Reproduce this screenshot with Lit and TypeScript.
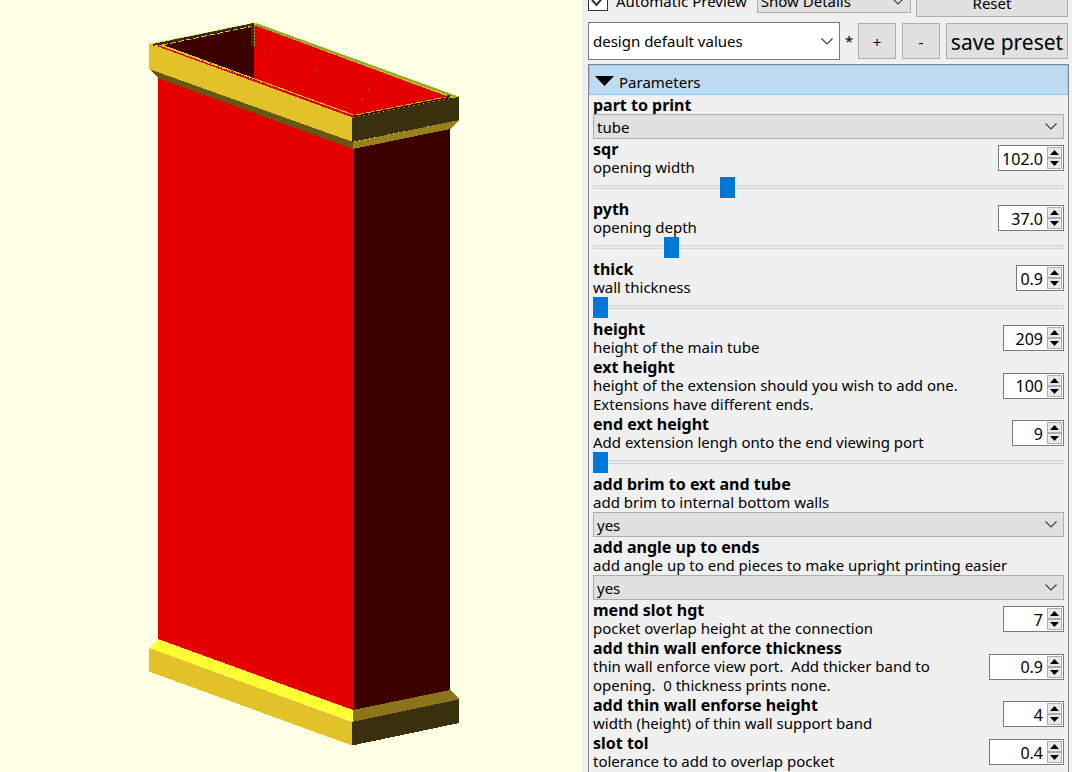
import { LitElement, html, css, svg } from "lit";
import { customElement, property } from "lit/decorators.js";

interface Param {
  id: string;
  name: string;
  desc?: string;
  kind: "select" | "number";
  value: string;
  size?: "s" | "m" | "l" | "xl" | "xxl";
  slider?: number;
}

const PARAMS: Param[] = [
  { id: "part", name: "part to print", kind: "select", value: "tube" },
  { id: "sqr", name: "sqr", desc: "opening width", kind: "number", value: "102.0", size: "xl", slider: 279 },
  { id: "pyth", name: "pyth", desc: "opening depth", kind: "number", value: "37.0", size: "xl", slider: 156 },
  { id: "thick", name: "thick", desc: "wall thickness", kind: "number", value: "0.9", size: "s", slider: 0 },
  { id: "height", name: "height", desc: "height of the main tube", kind: "number", value: "209", size: "l" },
  { id: "ext", name: "ext height", desc: "height of the extension should you wish to add one. Extensions have different ends.", kind: "number", value: "100", size: "l" },
  { id: "end", name: "end ext height", desc: "Add extension lengh onto the end viewing port", kind: "number", value: "9", size: "m", slider: 0 },
  { id: "brim", name: "add brim to ext and tube", desc: "add brim to internal bottom walls", kind: "select", value: "yes" },
  { id: "angle", name: "add angle up to ends", desc: "add angle up to end pieces to make upright printing easier", kind: "select", value: "yes" },
  { id: "mend", name: "mend slot hgt", desc: "pocket overlap height at the connection", kind: "number", value: "7", size: "l" },
  { id: "thin", name: "add thin wall enforce thickness", desc: "thin wall enforce view port.  Add thicker band to opening.  0 thickness prints none.", kind: "number", value: "0.9", size: "xxl" },
  { id: "band", name: "add thin wall enforse height", desc: "width (height) of thin wall support band", kind: "number", value: "4", size: "l" },
  { id: "tol", name: "slot tol", desc: "tolerance to add to overlap pocket", kind: "number", value: "0.4", size: "xxl" },
];

const chevron = svg`<path d="M0.5 0.5 L6 6 L11.5 0.5" fill="none" stroke="#404040" stroke-width="1.2"/>`;

const controls = css`
  * { box-sizing: border-box; }
  button, input, select {
    font: inherit;
    color: #000;
    margin: 0;
    border-radius: 0;
    outline: none;
  }
  .combo { display: grid; min-width: 0; }
  .combo > * { grid-area: 1 / 1; }
  .combo select {
    appearance: none;
    width: 100%;
    height: 25px;
    padding: 1px 24px 0 3px;
    border: 1px solid #adadad;
    background: #e1e1e1;
  }
  .combo svg {
    width: 12px;
    height: 7px;
    justify-self: end;
    align-self: center;
    margin-right: 7px;
    pointer-events: none;
  }
`;

@customElement("tube-view")
class TubeView extends LitElement {
  static styles = css`
    :host { display: block; background: #ffffe5; min-width: 0; overflow: hidden; }
    .scene { display: block; width: 100%; height: 100%; }
  `;
  render() {
    return html`<svg class="scene" viewBox="0 0 582 772" preserveAspectRatio="xMidYMid meet" shape-rendering="crispEdges" role="img" aria-label="tube">
      <polygon points="158,76 354,147 354,711 158,641" fill="#e40000" />
      <polygon points="354,147 450,127 450,691 354,711" fill="#3c0000" />
      <polygon points="158,639 353,710 353,722 149,648" fill="#ffff33" />
      <polygon points="353,710 450,690 459,699 459,700 353,722" fill="#8a751a" />
      <polygon points="149,648 352,722 352,745.5 149,671.5" fill="#e1c229" />
      <polygon points="352,722 459,699.3 459,723 352,745.5" fill="#3a300d" />
      <polygon points="149,44 255,22.5 459,96.5 352,118" fill="#e1c229" />
      <polygon points="160,44.5 254,25 254,80" fill="#3c0000" />
      <polygon points="254,25 449,97 354,117 254,80" fill="#e40000" />
      <polygon points="149,44 352.5,118 352.5,142 149,69" fill="#e1c229" />
      <polygon points="352,118 459,96.5 459,120 352,142" fill="#3a300d" />
      <path d="M153 45 L254 24" stroke="#2a3316" stroke-width="2" fill="none" />
      <path d="M162 45 L251 26.5" stroke="#e1c229" stroke-width="1" stroke-dasharray="6 2" fill="none" />
      <path d="M256 24.4 L456 97" stroke="#87a83c" stroke-width="2" fill="none" />
      <path d="M163 45.5 L353 114.8" stroke="#e1c229" stroke-width="1.1" fill="none" />
      <path d="M158 45.8 L353 117" stroke="#e40000" stroke-width="1.3" fill="none" />
      <path d="M354 116.6 L450 97.3" stroke="#3c0000" stroke-width="1.4" fill="none" />
      <path d="M356 115 L446 97" stroke="#e1c229" stroke-width="1" stroke-dasharray="8 2" fill="none" />
      <rect x="251" y="25" width="3" height="21" fill="#2a3316" />
      <path d="M254.5 26 V47" stroke="#87a83c" stroke-width="1" stroke-dasharray="2 1" />
      <polygon points="444,96 450,95 450,98 446,98" fill="#2a3316" />
      <path d="M264 50h1v1h-1z M316 69h1v1h-1z M368 88h1v1h-1z" fill="#4f9a2c" />
      <rect x="362" y="99" width="1" height="1" fill="#e1a229" />
      <polygon points="149,69 353,142 353,149 158,78" fill="#675713" />
      <polygon points="353,142 459,120 450,129 353,149" fill="#98811b" />
    </svg>`;
  }
}

@customElement("param-row")
class ParamRow extends LitElement {
  @property({ attribute: false }) param!: Param;
  static styles = [
    controls,
    css`
      :host { display: block; }
      .line { display: flex; align-items: center; justify-content: space-between; gap: 28px; }
      .text { display: block; min-width: 0; white-space: pre-wrap; }
      .name { display: block; padding-top: 2px; font-weight: bold; font-size: 16px; line-height: 17px; }
      .desc { display: block; }
      .spin { display: flex; flex: none; height: 26px; border: 1px solid #7a7a7a; background: #fff; padding: 1px; }
      .s { width: 48px; }
      .m { width: 52px; }
      .l { width: 61px; }
      .xl { width: 66px; }
      .xxl { width: 75px; }
      .value { flex: 1; width: 0; border: 0; padding: 2px 4px 0 0; background: transparent; text-align: right; font-size: 16px; }
      .steps { display: grid; grid-template-rows: 1fr 1fr; width: 15px; }
      .step { display: grid; place-items: center; padding: 0; border: 1px solid #adadad; background: #e9e9e9; }
      .step svg { display: block; width: 9px; height: 5px; }
      .slider { appearance: none; display: block; width: 100%; height: 20px; margin: 0 0 2px; background: transparent; }
      .slider::-webkit-slider-runnable-track { height: 4px; box-shadow: inset 0 0 0 1px #d6d6d6; background: #e7eaea; }
      .slider::-webkit-slider-thumb { appearance: none; width: 15px; height: 21px; margin-top: -8px; background: #0078d7; border-radius: 0; }
    `,
  ];
  render() {
    const p = this.param;
    const text = html`<label class="text" for=${p.id}><span class="name">${p.name}</span>${p.desc ? html`<span class="desc">${p.desc}</span>` : ""}</label>`;
    if (p.kind === "select") {
      return html`${text}
        <div class="combo"><select id=${p.id}><option>${p.value}</option></select><svg viewBox="0 0 12 7">${chevron}</svg></div>`;
    }
    return html`<div class="line">${text}
        <div class="spin ${p.size}">
          <input class="value" id=${p.id} type="text" inputmode="decimal" .value=${p.value} />
          <div class="steps">
            <button class="step" aria-label="increase"><svg viewBox="0 0 9 5"><path d="M0 5 L4.5 0 L9 5z" /></svg></button>
            <button class="step" aria-label="decrease"><svg viewBox="0 0 9 5"><path d="M0 0 L4.5 5 L9 0z" /></svg></button>
          </div>
        </div>
      </div>
      ${p.slider === undefined ? "" : html`<input class="slider" type="range" min="0" max="1000" .value=${String(p.slider)} aria-label=${p.name} />`}`;
  }
}

@customElement("app-root")
class AppRoot extends LitElement {
  static styles = [
    controls,
    css`
      :host {
        display: grid;
        grid-template-columns: minmax(0, 582fr) minmax(0, 490fr);
        height: 100vh;
        overflow: hidden;
        font: 15px/19px "Noto Sans", sans-serif;
        color: #000;
      }
      .panel { display: flex; flex-direction: column; min-width: 0; min-height: 0; overflow: hidden; background: #f0f0f0; padding: 0 3px 0 6px; }
      .top { display: flex; align-items: flex-start; flex: none; gap: 5px; margin: -11px 1px 0 0; }
      .auto { display: flex; align-items: center; gap: 8px; height: 24px; margin-right: 5px; white-space: nowrap; }
      .box { appearance: none; width: 20px; height: 20px; border: 1px solid #333; background: #fff; }
      .tick { display: grid; }
      .tick > * { grid-area: 1 / 1; place-self: center; }
      .tick svg { width: 14px; height: 12px; pointer-events: none; }
      .details { flex: 1; }
      .details select { height: 24px; }
      .btn { border: 1px solid #adadad; background: #e1e1e1; padding: 2px 0 0; white-space: nowrap; }
      .reset { flex: none; width: 152px; height: 28px; padding: 0; }
      .presets { display: flex; align-items: center; flex: none; gap: 6px; margin: 5px 1px 0 0; }
      .preset { flex: 1; }
      .preset select { height: 38px; border-color: #7a7a7a; background: #fff; padding-left: 4px; }
      .star { width: 6px; display: flex; justify-content: center; }
      .small { width: 38px; height: 36px; }
      .save { width: 122px; height: 36px; font-size: 21px; }
      .group { flex: 1 0 auto; margin-top: 4px; border: 1px solid #828790; border-bottom: 0; }
      .head { display: flex; align-items: center; gap: 5px; width: 100%; height: 30px; padding: 4px 5px 0; border: 1px solid #90c8f6; background: #bfdbf2; text-align: left; }
      .head svg { width: 19px; height: 10px; margin-bottom: 2px; }
      .rows { padding: 0 4px; }
    `,
  ];
  render() {
    return html`
      <tube-view></tube-view>
      <div class="panel">
        <div class="top">
          <label class="auto"><span class="tick"><input class="box" type="checkbox" checked /><svg viewBox="0 0 14 12"><path d="M1 5 L5.5 10 L13 1" fill="none" stroke="#333" stroke-width="2" /></svg></span>Automatic Preview</label>
          <div class="combo details"><select aria-label="Details"><option>Show Details</option></select><svg viewBox="0 0 12 7">${chevron}</svg></div>
          <button class="btn reset">Reset</button>
        </div>
        <div class="presets">
          <div class="combo preset"><select aria-label="Preset"><option>design default values</option></select><svg viewBox="0 0 12 7">${chevron}</svg></div>
          <span class="star">*</span>
          <button class="btn small">+</button>
          <button class="btn small">-</button>
          <button class="btn save">save preset</button>
        </div>
        <div class="group">
          <button class="head"><svg viewBox="0 0 19 10"><path d="M0 0 H19 L9.5 10z" /></svg>Parameters</button>
          <div class="rows">${PARAMS.map((p) => html`<param-row .param=${p}></param-row>`)}</div>
        </div>
      </div>
    `;
  }
}
